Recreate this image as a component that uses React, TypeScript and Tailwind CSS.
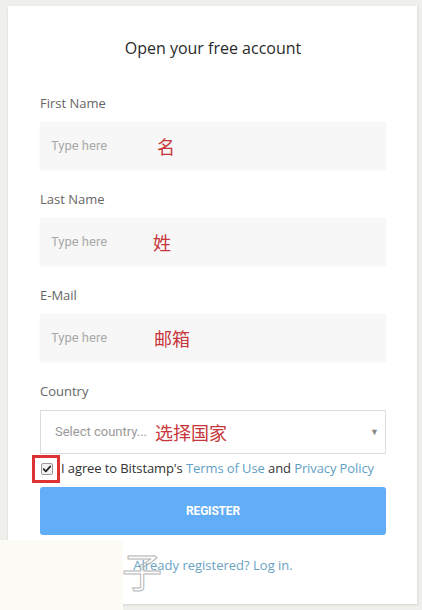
import { useState } from 'react';

const open = "font-['Open_Sans','Noto_Sans_CJK_SC',sans-serif]";
const roboto = "font-['Roboto','Liberation_Sans','Noto_Sans_CJK_SC',sans-serif]";

function Field({ label, top, note, gap }: { label: string; top: string; note: string; gap: string }) {
  return (
    <div className={top}>
      <div className={`${open} text-[13px] leading-[18px] text-[#666]`}>{label}</div>
      <div className="mt-[10px] h-[48px] rounded-[2px] bg-[#f7f7f7] shadow-[0_0_2px_rgba(0,0,0,0.06)] flex items-center pl-[11px]">
        <span className={`${roboto} text-[13px] text-[#aaa] ${gap}`}>Type here</span>
        <span className="font-['Noto_Sans_CJK_SC',sans-serif] text-[18px] text-[#c8353a]">{note}</span>
      </div>
    </div>
  );
}

export default function App() {
  const [agreed, setAgreed] = useState(true);

  return (
    <div className="relative w-[422px] h-[610px] overflow-hidden bg-[#efefeb] pt-[6px] pl-[8px]">
      <div className="w-[410px] h-[598px] bg-white border-r border-[#e2e2dc] shadow-[0_1px_2px_rgba(0,0,0,0.12)] pl-[32px] pr-[31px] pt-[31px]">
        <h1 className={`${open} text-center text-[16px] leading-[22px] text-[#2a2a2a]`}>Open your free account</h1>

        <Field label="First Name" top="mt-[35px]" note="名" gap="w-[106px]" />
        <Field label="Last Name" top="mt-[20px]" note="姓" gap="w-[102px]" />
        <Field label="E-Mail" top="mt-[20px]" note="邮箱" gap="w-[103px]" />

        <div className="mt-[20px]">
          <div className={`${open} text-[13px] leading-[18px] text-[#666]`}>Country</div>
          <div className="mt-[10px] h-[44px] border border-[#dcdcdc] bg-white flex items-center pl-[14px] pr-[6px]">
            <span className={`${roboto} text-[13px] text-[#999]`}>Select country...</span>
            <span className="ml-[8px] font-['Noto_Sans_CJK_SC',sans-serif] text-[18px] text-[#c8353a]">选择国家</span>
            <span className="ml-auto text-[9px] text-[#888]">▼</span>
          </div>
        </div>

        <div className={`${open} mt-[3px] flex items-center h-[24px] text-[13px] text-[#333]`}>
          <span className="relative ml-[1px] mr-[8px] inline-flex">
            <button
              type="button"
              onClick={() => setAgreed(!agreed)}
              className="w-[12px] h-[12px] rounded-[2px] border border-[#9a9a9a] bg-[#f2f2f2] flex items-center justify-center"
            >
              {agreed && (
                <svg viewBox="0 0 12 12" className="w-[10px] h-[10px]">
                  <path d="M2 6.2 L4.6 8.8 L10 2.8" fill="none" stroke="#222" strokeWidth={2} strokeLinecap="round" strokeLinejoin="round" />
                </svg>
              )}
            </button>
            <span className="absolute -left-[9px] -top-[8px] w-[28px] h-[28px] border-[3px] border-[#d33] pointer-events-none" />
          </span>
          <span className="tracking-[-0.1px]">
            I agree to Bitstamp's <a className="text-[#5f9fc4]">Terms of Use</a> and{' '}
            <a className="text-[#5f9fc4]">Privacy Policy</a>
          </span>
        </div>

        <button
          type="button"
          className={`${roboto} mt-[6px] w-full h-[48px] rounded-[3px] bg-[#62adf7] text-white text-[12px] font-bold tracking-[-0.2px]`}
        >
          REGISTER
        </button>

        <div className={`${open} mt-[21px] text-center text-[13px] text-[#6aa3c2]`}>
          Already registered? <a>Log in.</a>
        </div>
      </div>

      {/* watermark patch at bottom left */}
      <div className="absolute left-0 top-[540px] w-[123px] h-[70px] bg-[#fcfbf6]" />
      <div className="absolute left-[122px] top-[550px] text-[40px] leading-none font-['Noto_Sans_CJK_SC',sans-serif] text-transparent [-webkit-text-stroke:1px_#b5b5b5]">
        子
      </div>
    </div>
  );
}
